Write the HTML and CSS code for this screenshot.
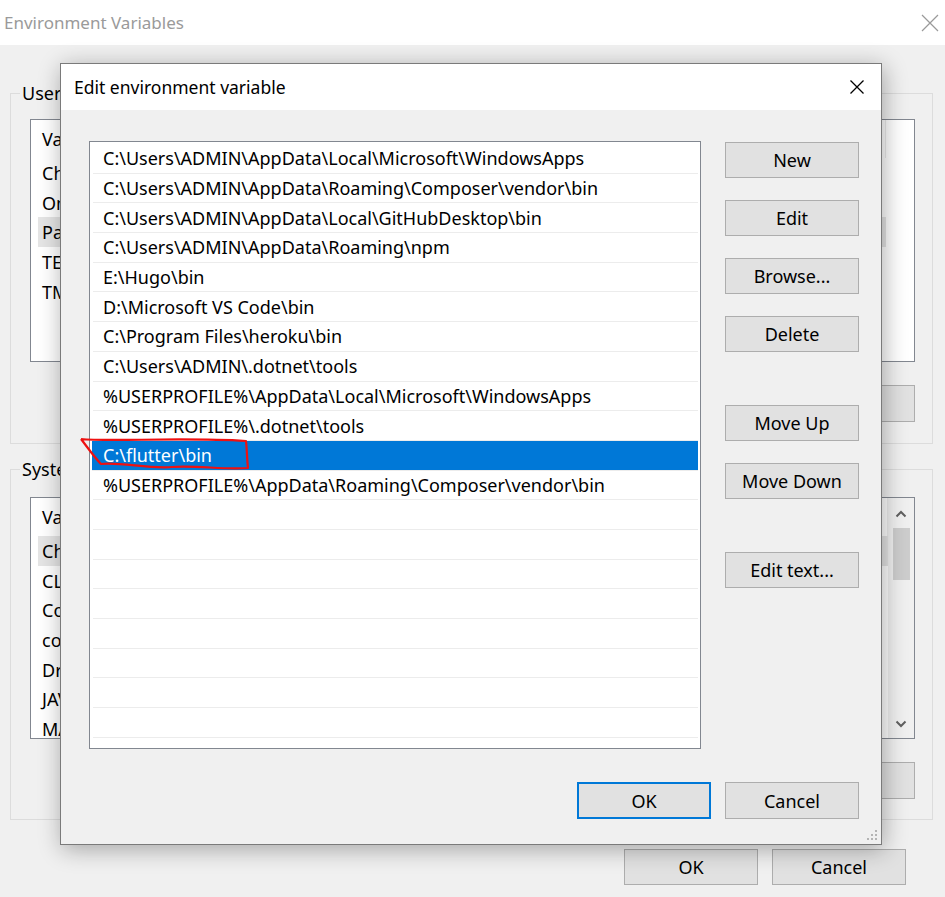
FILE: index.html
```html
<!DOCTYPE html>
<html lang="en">
<head>
    <meta charset="UTF-8">
    <meta name="viewport" content="width=device-width, initial-scale=1.0">
    <title>Environment Variables - Edit environment variable</title>
    <link rel="stylesheet" href="styles.css">
</head>
<body>
    <!-- Ventana de fondo: Environment Variables -->
    <div class="window">
        <div class="titlebar">
            <span class="title">Environment Variables</span>
            <svg class="close-bg" width="18" height="18" viewBox="0 0 18 18">
                <path d="M1 1 L17 17 M17 1 L1 17" stroke="#9a9a9a" stroke-width="1.2" fill="none"/>
            </svg>
        </div>

        <div class="window-body">
            <fieldset class="group group-user">
                <legend>User variables for ADMIN</legend>
                <div class="listview lv-user">
                    <div class="lv-header"><span class="col-var">Variable</span></div>
                    <div class="lv-row"><span class="col-var">ChocolateyLastPathUpdate</span></div>
                    <div class="lv-row"><span class="col-var">OneDrive</span></div>
                    <div class="lv-row selected"><span class="col-var">Path</span></div>
                    <div class="lv-row"><span class="col-var">TEMP</span></div>
                    <div class="lv-row"><span class="col-var">TMP</span></div>
                </div>
                <div class="group-buttons">
                    <button class="btn">New...</button>
                    <button class="btn">Edit...</button>
                    <button class="btn">Delete</button>
                </div>
            </fieldset>

            <fieldset class="group group-system">
                <legend>System variables</legend>
                <div class="listview lv-system">
                    <div class="lv-content">
                        <div class="lv-header"><span class="col-var">Variable</span></div>
                        <div class="lv-row selected"><span class="col-var">ChocolateyInstall</span></div>
                        <div class="lv-row"><span class="col-var">CLASSPATH</span></div>
                        <div class="lv-row"><span class="col-var">ComSpec</span></div>
                        <div class="lv-row"><span class="col-var">configsetroot</span></div>
                        <div class="lv-row"><span class="col-var">DriverData</span></div>
                        <div class="lv-row"><span class="col-var">JAVA_HOME</span></div>
                        <div class="lv-row"><span class="col-var">MAVEN_HOME</span></div>
                    </div>
                    <div class="scrollbar">
                        <svg class="arrow" width="12" height="8" viewBox="0 0 12 8"><path d="M1.5 6.5 L6 2 L10.5 6.5" stroke="#606060" stroke-width="2" fill="none"/></svg>
                        <div class="track"><div class="thumb"></div></div>
                        <svg class="arrow" width="12" height="8" viewBox="0 0 12 8"><path d="M1.5 1.5 L6 6 L10.5 1.5" stroke="#606060" stroke-width="2" fill="none"/></svg>
                    </div>
                </div>
                <div class="group-buttons">
                    <button class="btn">New...</button>
                    <button class="btn">Edit...</button>
                    <button class="btn">Delete</button>
                </div>
            </fieldset>

            <div class="footer">
                <button class="btn">OK</button>
                <button class="btn">Cancel</button>
            </div>
        </div>
    </div>

    <!-- Dialogo: Edit environment variable -->
    <div class="dialog">
        <div class="dialog-titlebar">
            <span class="dialog-title">Edit environment variable</span>
            <svg class="close" width="16" height="16" viewBox="0 0 16 16">
                <path d="M1.5 1.5 L14.5 14.5 M14.5 1.5 L1.5 14.5" stroke="#000" stroke-width="1.3" fill="none"/>
            </svg>
        </div>

        <div class="dialog-body">
            <div class="dialog-main">
                <div class="pathlist">
                    <div class="path-row">C:\Users\ADMIN\AppData\Local\Microsoft\WindowsApps</div>
                    <div class="path-row">C:\Users\ADMIN\AppData\Roaming\Composer\vendor\bin</div>
                    <div class="path-row">C:\Users\ADMIN\AppData\Local\GitHubDesktop\bin</div>
                    <div class="path-row">C:\Users\ADMIN\AppData\Roaming\npm</div>
                    <div class="path-row">E:\Hugo\bin</div>
                    <div class="path-row">D:\Microsoft VS Code\bin</div>
                    <div class="path-row">C:\Program Files\heroku\bin</div>
                    <div class="path-row">C:\Users\ADMIN\.dotnet\tools</div>
                    <div class="path-row">%USERPROFILE%\AppData\Local\Microsoft\WindowsApps</div>
                    <div class="path-row">%USERPROFILE%\.dotnet\tools</div>
                    <div class="path-row active">C:\flutter\bin</div>
                    <div class="path-row">%USERPROFILE%\AppData\Roaming\Composer\vendor\bin</div>
                    <div class="path-row"></div>
                    <div class="path-row"></div>
                    <div class="path-row"></div>
                    <div class="path-row"></div>
                    <div class="path-row"></div>
                    <div class="path-row"></div>
                    <div class="path-row"></div>
                    <div class="path-row"></div>
                </div>

                <div class="side-buttons">
                    <button class="btn">New</button>
                    <button class="btn">Edit</button>
                    <button class="btn">Browse...</button>
                    <button class="btn">Delete</button>
                    <button class="btn gap-large">Move Up</button>
                    <button class="btn">Move Down</button>
                    <button class="btn gap-large">Edit text...</button>
                </div>
            </div>

            <div class="dialog-footer">
                <button class="btn btn-default">OK</button>
                <button class="btn">Cancel</button>
            </div>
        </div>

        <svg class="grip" width="14" height="14" viewBox="0 0 14 14">
            <rect x="10" y="2" width="2" height="2" fill="#b4b4b4"/>
            <rect x="6" y="6" width="2" height="2" fill="#b4b4b4"/>
            <rect x="10" y="6" width="2" height="2" fill="#b4b4b4"/>
            <rect x="2" y="10" width="2" height="2" fill="#b4b4b4"/>
            <rect x="6" y="10" width="2" height="2" fill="#b4b4b4"/>
            <rect x="10" y="10" width="2" height="2" fill="#b4b4b4"/>
        </svg>
    </div>

    <!-- Marca a mano alzada en rojo -->
    <svg class="annotation" width="945" height="897" viewBox="0 0 945 897">
        <path d="M81 439 C110 442 180 437 246 441 C247 450 247 460 248 468 C225 470 195 465 172 467 C148 469 122 462 101 464 C95 458 88 448 81 439"
              stroke="#ee1111" stroke-width="2.2" fill="none" stroke-linejoin="round"/>
    </svg>
</body>
</html>
```

FILE: styles.css
```css
body {
    margin: 0;
    width: 945px;
    height: 897px;
    overflow: hidden;
    font-family: "Noto Sans", "Open Sans", sans-serif;
    font-size: 18px;
    color: #000;
    background-color: #f0f0f0;
    position: relative;
}
.window {
    width: 945px;
    height: 897px;
}
.titlebar {
    height: 45px;
    background-color: #fff;
    display: flex;
    align-items: center;
    padding-left: 4px;
}
.title {
    color: #9a9a9a;
    font-size: 17px;
}
.close-bg {
    margin-left: auto;
    margin-right: 6px;
}
.window-body {
    padding-top: 37px;
}
.btn {
    font-family: inherit;
    font-size: 18px;
    color: #000;
    background-color: #e1e1e1;
    border: 1px solid #adadad;
    width: 134px;
    height: 37px;
    padding: 0;
    box-sizing: border-box;
}
.group {
    margin: 0 12px 0 10px;
    padding: 15px 17px 21px 19px;
    border: 1px solid #dcdcdc;
    min-width: 0;
}
.group legend {
    padding: 0 2px;
    margin-left: -10px;
    line-height: 22px;
}
.group-system {
    margin-top: 14px;
    padding-top: 17px;
    padding-bottom: 20px;
}
.listview {
    height: 243px;
    box-sizing: border-box;
    border: 1px solid #828790;
    background-color: #fff;
    overflow: hidden;
}
.lv-system {
    height: 242px;
    display: flex;
}
.lv-content {
    flex: 1;
}
.lv-header {
    height: 38px;
    display: flex;
    align-items: center;
    padding-left: 11px;
    margin-right: 28px;
    border-right: 1px solid #ececec;
}
.lv-system .lv-header {
    margin-right: 0;
}
.lv-row {
    height: 29.7px;
    display: flex;
    align-items: center;
    margin-left: 7px;
    margin-right: 28px;
    padding-left: 4px;
}
.lv-system .lv-row {
    margin-right: 0;
}
.lv-row.selected {
    background-color: #e5e5e5;
}
.col-var {
    white-space: nowrap;
}
.scrollbar {
    width: 26px;
    background-color: #f0f0f0;
    display: flex;
    flex-direction: column;
    align-items: center;
}
.scrollbar .arrow {
    margin: 12px 0 10px;
}
.track {
    flex: 1;
    width: 100%;
    display: flex;
    justify-content: center;
}
.thumb {
    width: 17px;
    height: 52px;
    background-color: #cdcdcd;
}
.group-buttons {
    margin-top: 23px;
    display: flex;
    justify-content: flex-end;
    gap: 14px;
}
.footer {
    margin-top: 29px;
    padding-right: 39px;
    display: flex;
    justify-content: flex-end;
    gap: 14px;
}
.footer .btn {
    height: 36px;
}

/* Dialogo */
.dialog {
    position: absolute;
    left: 60px;
    top: 63px;
    width: 822px;
    height: 782px;
    box-sizing: border-box;
    border: 1px solid #7a7a7a;
    background-color: #f0f0f0;
    box-shadow: 2px 4px 22px rgba(0, 0, 0, 0.32);
    display: flex;
    flex-direction: column;
}
.dialog-titlebar {
    height: 46px;
    background-color: #fff;
    display: flex;
    align-items: center;
    padding-left: 13px;
}
.dialog-title {
    font-size: 17.5px;
}
.close {
    margin-left: auto;
    margin-right: 16px;
}
.dialog-body {
    padding: 31px 22px 0 28px;
}
.dialog-main {
    display: flex;
    gap: 24px;
}
.pathlist {
    width: 612px;
    height: 608px;
    box-sizing: border-box;
    border: 1px solid #828790;
    background-color: #fff;
    padding: 2px 2px;
}
.path-row {
    height: 29.7px;
    box-sizing: border-box;
    border-bottom: 1px solid #ececec;
    margin-left: 1px;
    padding-left: 10px;
    display: flex;
    align-items: center;
    white-space: nowrap;
}
.path-row.active {
    background-color: #0078d7;
    color: #fff;
    margin-left: 0;
    padding-left: 11px;
}
.side-buttons {
    display: flex;
    flex-direction: column;
    gap: 22px;
    padding-top: 1px;
}
.side-buttons .btn {
    height: 36px;
}
.side-buttons .gap-large {
    margin-top: 31px;
}
.dialog-footer {
    margin-top: 33px;
    display: flex;
    justify-content: flex-end;
    gap: 14px;
}
.dialog-footer .btn {
    height: 37px;
}
.btn-default {
    border: 2px solid #0078d7;
}
.grip {
    position: absolute;
    right: 2px;
    bottom: 2px;
}
.annotation {
    position: absolute;
    left: 0;
    top: 0;
    pointer-events: none;
}
```
